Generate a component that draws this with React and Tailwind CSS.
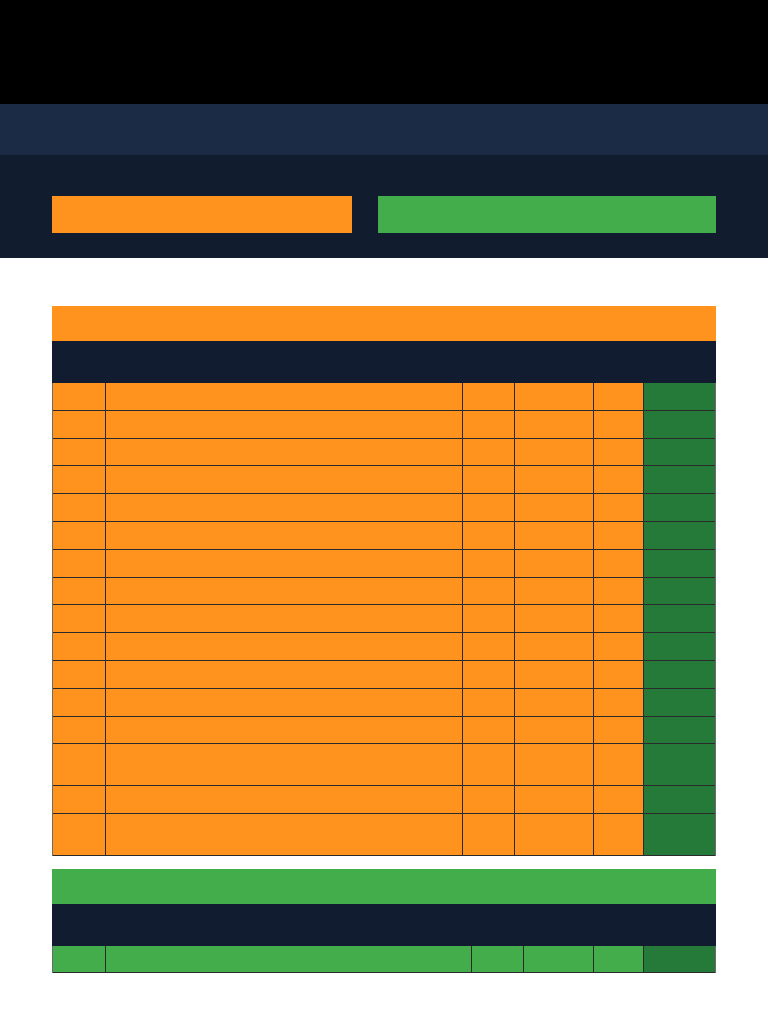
import React from "react";

// column widths for the two tables (px)
const colsA = [53, 357, 52, 79, 50, 73];
const colsB = [53, 366, 52, 70, 50, 73];

const rowsA = [28, 28, 27, 28, 28, 28, 28, 27, 28, 28, 28, 28, 27, 42, 28, 42];

function Row({ cols, height, color }) {
    return (
        <div className="flex border-b border-[#2a2a2a]" style={{ height }}>
            {cols.map((w, i) => {
                const last = i === cols.length - 1;
                return (
                    <div
                        key={i}
                        className={
                            last
                                ? "bg-[#267a39] border-l border-[#2a2a2a]"
                                : i === 0
                                ? color
                                : `${color} border-l border-[#2a2a2a]`
                        }
                        style={{ width: w }}
                    />
                );
            })}
        </div>
    );
}

function Section({ headColor, cellColor, cols, rows }) {
    return (
        <div className="flex flex-col">
            {/* section title bar */}
            <div className={`h-[35px] ${headColor}`} />
            {/* column head */}
            <div className="h-[42px] bg-[#121c31]" />
            <div className="border-x border-[#6b6b6b]">
                {rows.map((h, i) => (
                    <Row key={i} cols={cols.map((c, j) => (j === 0 ? c - 1 : j === cols.length - 1 ? c - 1 : c))} height={h} color={cellColor} />
                ))}
            </div>
        </div>
    );
}

export default function App() {
    return (
        <div className="min-h-screen bg-white font-['Liberation_Sans',sans-serif]">
            {/* top bar */}
            <div className="h-[104px] bg-black" />
            <div className="h-[51px] bg-[#1b2a45]" />

            {/* hero buttons */}
            <div className="h-[103px] bg-[#121c2f] px-[52px] pt-[41px]">
                <div className="flex gap-[26px]">
                    <div className="h-[37px] w-[300px] bg-[#ff931e]" />
                    <div className="h-[37px] flex-1 bg-[#43ad4b]" />
                </div>
            </div>

            <div className="px-[52px] pt-[48px] flex flex-col gap-[13px]">
                <Section headColor="bg-[#ff931e]" cellColor="bg-[#ff931e]" cols={colsA} rows={rowsA} />
                <Section headColor="bg-[#43ad4b]" cellColor="bg-[#43ad4b]" cols={colsB} rows={[27]} />
            </div>
        </div>
    );
}
